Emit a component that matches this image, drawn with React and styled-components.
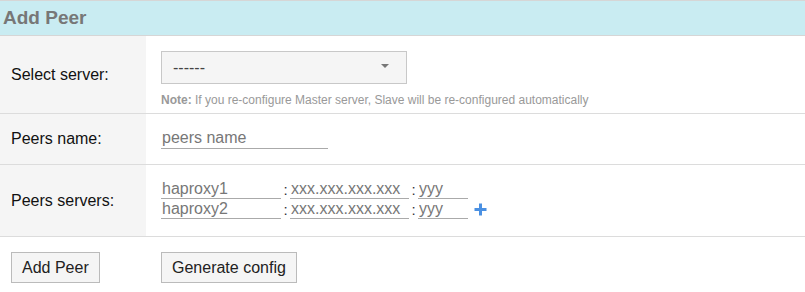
import styled, { createGlobalStyle } from "styled-components";

const GlobalStyle = createGlobalStyle`
  body {
    margin: 0;
    background: #fff;
    font-family: "Liberation Sans", Arial, sans-serif;
  }
`;

const peers = [
  { name: "haproxy1", ip: "xxx.xxx.xxx.xxx", port: "yyy" },
  { name: "haproxy2", ip: "xxx.xxx.xxx.xxx", port: "yyy", last: true },
];

const App = () => {
  return (
    <>
      <GlobalStyle />
      <StPanel>
        <StHeader>Add Peer</StHeader>

        <StRow>
          <StLabel>Select server:</StLabel>
          <StValue $pad="15px 15px 5px">
            <StSelect>
              <span>------</span>
              <StCaret />
            </StSelect>
            <StNote>
              <b>Note:</b> If you re-configure Master server, Slave will be
              re-configured automatically
            </StNote>
          </StValue>
        </StRow>

        <StRow>
          <StLabel>Peers name:</StLabel>
          <StValue $pad="13px 15px 15px">
            <StInput $width={167} placeholder="peers name" />
          </StValue>
        </StRow>

        <StRow>
          <StLabel>Peers servers:</StLabel>
          <StValue $pad="14px 15px 17px">
            {peers.map((p) => (
              <StPeerLine key={p.name}>
                <StInput $width={120} $height={20} placeholder={p.name} />
                <StColon>:</StColon>
                <StInput $width={119} $height={20} placeholder={p.ip} />
                <StColon>:</StColon>
                <StInput $width={50} $height={20} placeholder={p.port} />
                {p.last && (
                  <StPlus aria-label="add">
                    <svg width="13" height="13" viewBox="0 0 13 13">
                      <path
                        d="M6.5 0.5v12M0.5 6.5h12"
                        stroke="#4a90e2"
                        strokeWidth="3"
                      />
                    </svg>
                  </StPlus>
                )}
              </StPeerLine>
            ))}
          </StValue>
        </StRow>

        <StFooter>
          <StFooterCell $pad="15px 11px">
            <StButton>Add Peer</StButton>
          </StFooterCell>
          <StFooterCell $pad="15px 15px">
            <StButton>Generate config</StButton>
          </StFooterCell>
        </StFooter>
      </StPanel>
    </>
  );
};

const StPanel = styled.div`
  width: 805px;
  border-top: 1px solid #d6d6d6;
`;

const StHeader = styled.div`
  height: 34px;
  display: flex;
  align-items: center;
  padding-left: 3px;
  background: #c9ecf2;
  border-bottom: 1px solid #d6d6d6;
  color: #777;
  font-weight: 700;
  font-size: 19px;
`;

const StRow = styled.div`
  display: grid;
  grid-template-columns: 146px 1fr;
  border-bottom: 1px solid #dcdcdc;
`;

const StLabel = styled.div`
  display: flex;
  align-items: center;
  padding-left: 11px;
  background: #f5f5f5;
  color: #111;
  font-size: 16px;
`;

const StValue = styled.div`
  padding: ${({ $pad }) => $pad};
`;

const StSelect = styled.div`
  box-sizing: border-box;
  width: 246px;
  height: 33px;
  display: flex;
  align-items: center;
  justify-content: space-between;
  padding: 0 17px 0 11px;
  background: #f5f5f5;
  border: 1px solid #c8c8c8;
  color: #444;
  font-size: 16px;
`;

const StCaret = styled.span`
  width: 0;
  height: 0;
  margin-top: -3px;
  border-left: 4px solid transparent;
  border-right: 4px solid transparent;
  border-top: 4px solid #777;
`;

const StNote = styled.div`
  margin-top: 9px;
  line-height: 15px;
  font-size: 12px;
  color: #999;

  b {
    font-weight: 700;
  }
`;

const StInput = styled.input`
  box-sizing: border-box;
  width: ${({ $width }) => $width}px;
  height: ${({ $height }) => $height || 22}px;
  padding: 0 1px;
  border: none;
  border-bottom: 1px solid #aaa;
  outline: none;
  background: transparent;
  font-family: "Liberation Sans", Arial, sans-serif;
  font-size: 16px;
  color: #777;

  &::placeholder {
    color: #777;
    opacity: 1;
  }
`;

const StPeerLine = styled.div`
  display: flex;
  align-items: flex-end;
`;

const StColon = styled.span`
  width: 9px;
  text-align: center;
  line-height: 18px;
  font-size: 15px;
  color: #333;
`;

const StPlus = styled.span`
  display: flex;
  margin: 0 0 3px 6px;
`;

const StFooter = styled.div`
  display: grid;
  grid-template-columns: 146px 1fr;
`;

const StFooterCell = styled.div`
  padding: ${({ $pad }) => $pad};
`;

const StButton = styled.button`
  height: 31px;
  padding: 0 10px;
  background: #f5f5f5;
  border: 1px solid #bbb;
  border-radius: 0;
  font-family: "Liberation Sans", Arial, sans-serif;
  font-size: 16px;
  color: #222;
`;

export default App;
